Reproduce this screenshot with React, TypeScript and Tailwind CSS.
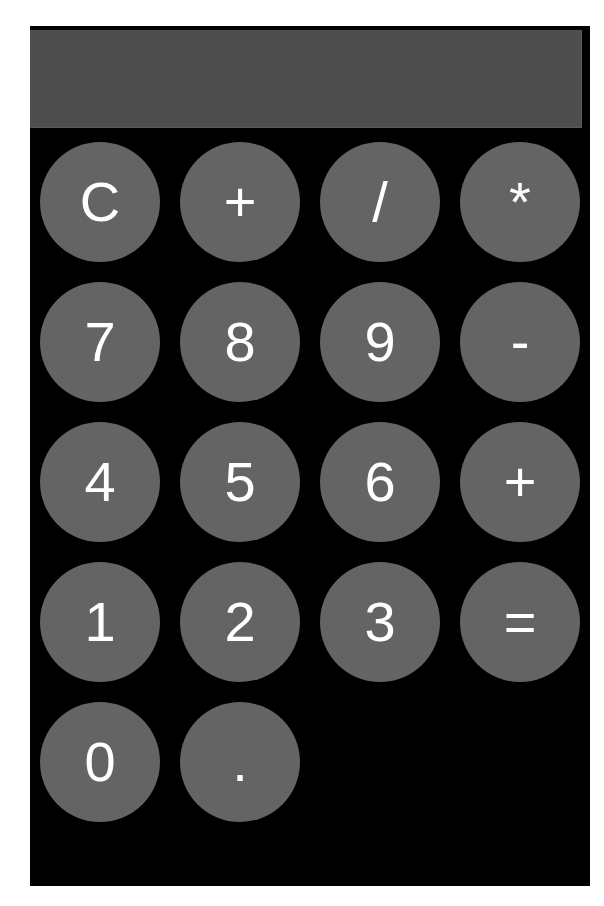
import { useState } from 'react';

const KEYS = ['C', '+', '/', '*', '7', '8', '9', '-', '4', '5', '6', '+', '1', '2', '3', '=', '0', '.'];

export default function App() {
  const [display, setDisplay] = useState('');

  const press = (key: string) => {
    if (key === 'C') return setDisplay('');
    if (key === '=') {
      try {
        // eslint-disable-next-line no-new-func
        setDisplay(String(Function(`return (${display})`)()));
      } catch {
        setDisplay('Error');
      }
      return;
    }
    setDisplay(display + key);
  };

  return (
    <div className="min-h-screen bg-white pt-[26px] pl-[30px]" style={{ fontFamily: '"Liberation Sans", Arial, sans-serif' }}>
      <div className="w-[560px] h-[860px] bg-black pt-[4px]">
        {/* Display */}
        <div className="w-[552px] h-[98px] bg-[#4e4e4e] border-b border-r border-[#5a5a5a] text-white text-5xl flex items-center justify-end px-4 overflow-hidden">
          {display}
        </div>

        {/* Keypad */}
        <div className="grid grid-cols-4 pt-[4px]">
          {KEYS.map((key, i) => (
            <button
              key={i}
              onClick={() => press(key)}
              className="m-[10px] w-[120px] h-[120px] rounded-full bg-[#646464] text-white text-[56px] leading-none flex items-center justify-center"
            >
              {key}
            </button>
          ))}
        </div>
      </div>
    </div>
  );
}
